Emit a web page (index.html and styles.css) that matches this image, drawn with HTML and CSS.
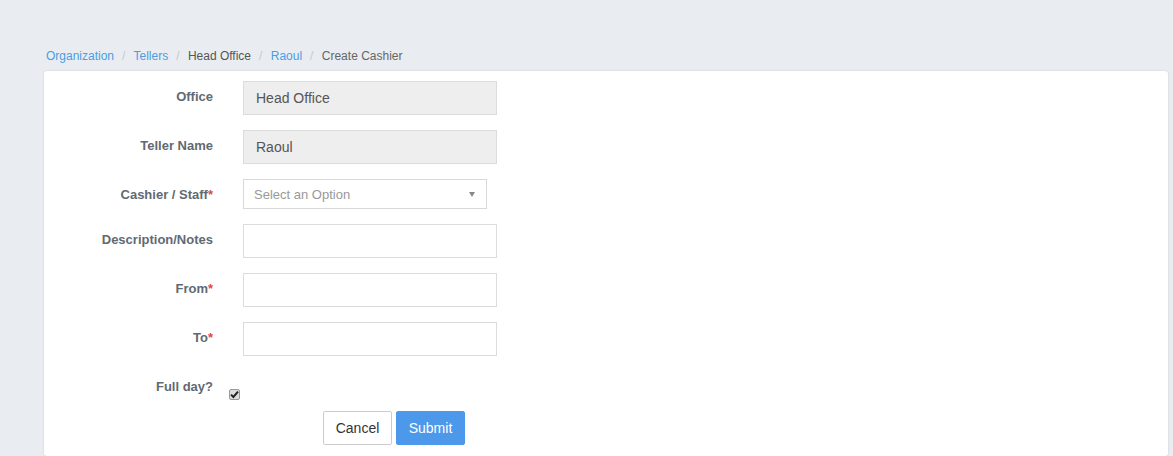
FILE: index.html
```html
<!DOCTYPE html>
<html>
<head>
<meta charset="utf-8">
<link rel="stylesheet" href="styles.css">
</head>
<body>
<div class="page">
  <nav class="crumbs">
    <a class="crumb-link">Organization</a><span class="sep">/</span>
    <a class="crumb-link">Tellers</a><span class="sep">/</span>
    <span class="crumb-text">Head Office</span><span class="sep">/</span>
    <a class="crumb-link">Raoul</a><span class="sep">/</span>
    <span class="crumb-active">Create Cashier</span>
  </nav>
  <div class="card">
    <div class="row">
      <label class="lbl">Office</label>
      <div class="field readonly">Head Office</div>
    </div>
    <div class="row">
      <label class="lbl">Teller Name</label>
      <div class="field readonly">Raoul</div>
    </div>
    <div class="row">
      <label class="lbl">Cashier / Staff<span class="req">*</span></label>
      <div class="select"><span class="ph">Select an Option</span><span class="caret"></span></div>
    </div>
    <div class="row">
      <label class="lbl">Description/Notes</label>
      <div class="field"></div>
    </div>
    <div class="row">
      <label class="lbl">From<span class="req">*</span></label>
      <div class="field"></div>
    </div>
    <div class="row">
      <label class="lbl">To<span class="req">*</span></label>
      <div class="field"></div>
    </div>
    <div class="row check-row">
      <label class="lbl">Full day?</label>
      <span class="checkbox"><svg width="9" height="9" viewBox="0 0 9 9"><path d="M1 4.6 L3.4 7 L8 1.6" fill="none" stroke="#222" stroke-width="2"/></svg></span>
    </div>
    <div class="actions">
      <button class="btn btn-default">Cancel</button>
      <button class="btn btn-primary">Submit</button>
    </div>
  </div>
</div>
</body>
</html>
```
FILE: styles.css
```css
html, body {
  margin: 0;
  padding: 0;
  background: #e9edf1;
  font-family: "Liberation Sans", Arial, sans-serif;
  height: 100%;
  overflow: hidden;
}
.page {
  padding: 48px 5px 0 44px;
}
.crumbs {
  font-size: 12px;
  line-height: 16px;
  padding-left: 2px;
  height: 23px;
  color: #555;
}
.crumb-link { color: #4a9de4; }
.crumb-text { color: #555; }
.crumb-active { color: #666; }
.sep {
  color: #c8c8c8;
  margin: 0 5px 0 8px;
}
.card {
  background: #fff;
  border-radius: 3px;
  box-shadow: 0 0 2px rgba(0,0,0,0.15);
  padding-top: 10px;
  height: 375px;
}
.row {
  display: grid;
  grid-template-columns: 169px 254px;
  column-gap: 30px;
  align-items: start;
  margin-bottom: 15px;
}
.lbl {
  text-align: right;
  font-weight: bold;
  font-size: 13px;
  line-height: 16px;
  padding-top: 8px;
  color: #5f6a73;
}
.req { color: #e0474c; }
.field {
  box-sizing: border-box;
  height: 34px;
  border: 1px solid #dcdcdc;
  background: #fff;
  font-size: 14px;
  line-height: 32px;
  padding-left: 12px;
  color: #555;
}
.field.readonly {
  background: #eee;
}
.select {
  box-sizing: border-box;
  width: 244px;
  height: 30px;
  border: 1px solid #d8d8d8;
  display: flex;
  align-items: center;
  justify-content: space-between;
  padding: 0 11px 0 10px;
}
.ph {
  color: #999;
  font-size: 13px;
}
.caret {
  width: 0;
  height: 0;
  border-left: 3.5px solid transparent;
  border-right: 3.5px solid transparent;
  border-top: 5px solid #888;
}
.check-row {
  grid-template-columns: 169px 20px;
  column-gap: 16px;
  height: 30px;
  margin-bottom: 10px;
}
.checkbox {
  box-sizing: border-box;
  margin-top: 18px;
  width: 11px;
  height: 11px;
  border: 1px solid #999;
  border-radius: 2px;
  background: #ddd;
  display: flex;
  align-items: center;
  justify-content: center;
}
.actions {
  display: flex;
  gap: 4px;
  padding-left: 279px;
}
.btn {
  font-family: "Liberation Sans", Arial, sans-serif;
  font-size: 14px;
  height: 34px;
  width: 69px;
  border-radius: 2px;
  padding: 0;
  cursor: pointer;
}
.btn-default {
  background: #fff;
  color: #333;
  border: 1px solid #ccc;
}
.btn-primary {
  background: #4c98ea;
  color: #fff;
  border: 1px solid #4c98ea;
}
```
